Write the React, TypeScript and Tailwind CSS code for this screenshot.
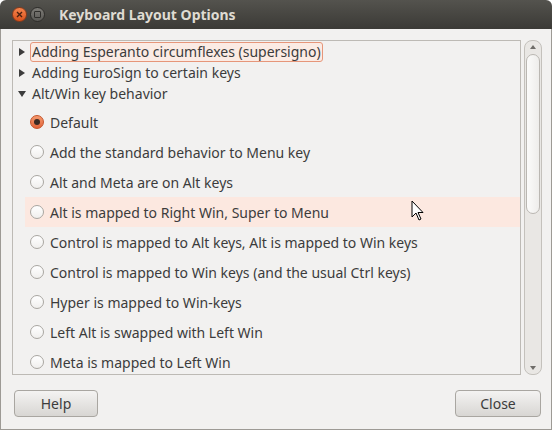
import React from "react";

const font = { fontFamily: '"Noto Sans", "DejaVu Sans", sans-serif' };

const options = [
  "Default",
  "Add the standard behavior to Menu key",
  "Alt and Meta are on Alt keys",
  "Alt is mapped to Right Win, Super to Menu",
  "Control is mapped to Alt keys, Alt is mapped to Win keys",
  "Control is mapped to Win keys (and the usual Ctrl keys)",
  "Hyper is mapped to Win-keys",
  "Left Alt is swapped with Left Win",
  "Meta is mapped to Left Win",
];

function Triangle({ open }: { open?: boolean }) {
  return (
    <svg width="10" height="10" viewBox="0 0 10 10" className="shrink-0">
      {open ? <path d="M1 2 L9 2 L5 8 Z" fill="#3c3c3c" /> : <path d="M2 1 L8 5 L2 9 Z" fill="#3c3c3c" />}
    </svg>
  );
}

function Radio({ checked }: { checked?: boolean }) {
  if (checked)
    return (
      <span className="flex h-[14px] w-[14px] shrink-0 items-center justify-center rounded-full border border-[#c4532a] bg-gradient-to-b from-[#f49a6e] to-[#e2633a]">
        <span className="h-[6px] w-[6px] rounded-full bg-[#3a2a24]" />
      </span>
    );
  return <span className="h-[14px] w-[14px] shrink-0 rounded-full border border-[#a9a6a1] bg-gradient-to-b from-white to-[#f0efed]" />;
}

export default function App() {
  return (
    <div className="flex h-[430px] w-[552px] flex-col overflow-hidden text-[#3c3c3c]" style={font}>
      <div className="flex h-[29px] shrink-0 items-center rounded-t-[6px] bg-gradient-to-b from-[#54534e] to-[#3b3a36] pl-[12px]">
        <span className="flex h-[15px] w-[15px] items-center justify-center rounded-full border border-[#8a3a1a] bg-gradient-to-b from-[#f5844c] to-[#d9521b]">
          <svg width="7" height="7" viewBox="0 0 7 7">
            <path d="M1 1 L6 6 M6 1 L1 6" stroke="#4a2010" strokeWidth="1.4" />
          </svg>
        </span>
        <span className="ml-[3px] flex h-[15px] w-[15px] items-center justify-center rounded-full border border-[#2e2d2a] bg-gradient-to-b from-[#7d7b76] to-[#5a5955]">
          <span className="h-[7px] w-[7px] rounded-[1px] border border-[#2f2e2b]" />
        </span>
        <span className="ml-[14px] text-[14px] font-bold text-[#dfdbd2]">Keyboard Layout Options</span>
      </div>
      <div className="flex flex-1 flex-col border-x border-b border-[#9d9a95] bg-[#f2f1f0] pl-[11px] pr-[9px] pt-[11px]">
        <div className="flex h-[335px] gap-[3px]">
          <div className="flex flex-1 flex-col overflow-hidden border border-[#bdbab5] bg-[#f2f1f0] pt-[1px] text-[14px]">
            <div className="flex h-[21px] items-center pl-[4px]">
              <Triangle />
              <span className="ml-[3px] rounded-[3px] border border-[#e6967a] bg-[#fbebe4] px-[1px] leading-[18px]">
                Adding Esperanto circumflexes (supersigno)
              </span>
            </div>
            <div className="flex h-[22px] items-center pl-[4px]">
              <Triangle />
              <span className="ml-[5px]">Adding EuroSign to certain keys</span>
            </div>
            <div className="flex h-[22px] items-center pl-[4px]">
              <Triangle open />
              <span className="ml-[5px]">Alt/Win key behavior</span>
            </div>
            <div className="mt-[3px] flex flex-col">
              {options.map((o, i) => (
                <div
                  key={o}
                  className={
                    i === 3
                      ? "relative ml-[12px] flex h-[30px] shrink-0 items-center bg-[#fce8e0] pl-[5px]"
                      : "flex h-[30px] shrink-0 items-center pl-[17px]"
                  }
                >
                  <Radio checked={i === 0} />
                  <span className="ml-[6px]">{o}</span>
                  {i === 3 && (
                    <svg className="absolute left-[386px] top-[3px]" width="14" height="22" viewBox="0 0 14 22">
                      <path d="M1 1 L1 17 L5 13 L8 20 L10 19 L7 12.5 L12 12.5 Z" fill="#fff" stroke="#000" strokeWidth="1" strokeLinejoin="round" />
                    </svg>
                  )}
                </div>
              ))}
            </div>
          </div>
          <div className="flex w-[18px] flex-col rounded-[8px] border border-[#c4c1bc] bg-[#e9e7e4] p-[1px]">
            <div className="flex h-[12px] items-start justify-center pt-[3px]">
              <svg width="6" height="4" viewBox="0 0 6 4"><path d="M0 4 L3 0 L6 4 Z" fill="#6f6d69" /></svg>
            </div>
            <div className="h-[160px] rounded-[7px] border border-[#bab7b2] bg-gradient-to-r from-[#fbfbfa] to-[#eeedeb]" />
            <div className="flex-1" />
            <div className="flex h-[12px] items-end justify-center pb-[3px]">
              <svg width="6" height="4" viewBox="0 0 6 4"><path d="M0 0 L3 4 L6 0 Z" fill="#6f6d69" /></svg>
            </div>
          </div>
        </div>
        <div className="mt-[15px] flex justify-between pl-[2px] pr-[1px]">
          <button className="h-[27px] w-[84px] rounded-[4px] border border-[#a9a6a1] bg-gradient-to-b from-[#f4f3f2] to-[#d8d6d3] text-[14px] text-[#3c3c3c]">
            Help
          </button>
          <button className="h-[27px] w-[86px] rounded-[4px] border border-[#a9a6a1] bg-gradient-to-b from-[#f4f3f2] to-[#d8d6d3] text-[14px] text-[#3c3c3c]">
            Close
          </button>
        </div>
      </div>
    </div>
  );
}
